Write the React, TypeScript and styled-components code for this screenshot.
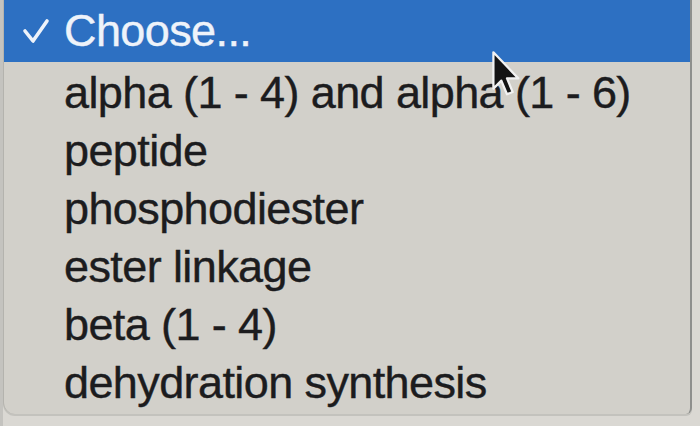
import React from "react";
import styled, { createGlobalStyle } from "styled-components";

const GlobalStyle = createGlobalStyle`
  html, body {
    margin: 0;
    padding: 0;
    background: #dcdad5;
  }
  body {
    width: 700px;
    height: 426px;
    overflow: hidden;
    font-family: "Liberation Sans", Arial, Helvetica, sans-serif;
  }
`;

const Screen = styled.div`
  position: relative;
  width: 700px;
  height: 426px;
  background: linear-gradient(90deg, #c4c3bf 0px, #c4c3bf 3px, #dad8d3 3px);
`;

const Menu = styled.ul`
  list-style: none;
  margin: 0 0 0 3px;
  padding: 0 0 2px 0;
  width: 686px;
  background: #d2d0ca;
  border-left: 1px solid #b4b3ae;
  border-right: 2px solid #8e8f8d;
  border-bottom-left-radius: 12px;
  border-bottom-right-radius: 6px;
  box-shadow: 0 2px 0 #c3c2bd;
`;

const Option = styled.li<{ $selected?: boolean }>`
  display: flex;
  align-items: center;
  height: ${({ $selected }) => ($selected ? "62px" : "58px")};
  margin-bottom: ${({ $selected }) => ($selected ? "2px" : "0")};
  padding-left: 18px;
  background: ${({ $selected }) => ($selected ? "#2d70c2" : "transparent")};
  color: ${({ $selected }) => ($selected ? "#eef3fa" : "#1c1c1e")};
  font-size: 45px;
  letter-spacing: -0.6px;
  -webkit-text-stroke: 0.4px currentColor;
  white-space: nowrap;
`;

const Check = styled.span`
  display: inline-flex;
  width: 42px;
  justify-content: flex-start;
`;

const Cursor = styled.svg`
  position: absolute;
  left: 490px;
  top: 50px;
`;

const options = [
  "alpha (1 - 4) and alpha (1 - 6)",
  "peptide",
  "phosphodiester",
  "ester linkage",
  "beta (1 - 4)",
  "dehydration synthesis",
];

export default function App() {
  return (
    <>
      <GlobalStyle />
      <Screen>
        <Menu>
          <Option $selected>
            <Check>
              <svg width="28" height="26" viewBox="0 0 28 26">
                <polyline
                  points="3,13 11,23 25,3"
                  fill="none"
                  stroke="#eef3fa"
                  strokeWidth="3.6"
                  strokeLinecap="round"
                  strokeLinejoin="round"
                />
              </svg>
            </Check>
            Choose...
          </Option>
          {options.map((label) => (
            <Option key={label}>
              <Check />
              {label}
            </Option>
          ))}
        </Menu>
        {/* mouse pointer over the list */}
        <Cursor width="34" height="50" viewBox="0 0 30 44">
          <path
            d="M3 2 L3 34 L10 27 L15 39 L20 37 L15 25 L25 25 Z"
            fill="#141414"
            stroke="#f2f2f2"
            strokeWidth="2"
            strokeLinejoin="round"
          />
        </Cursor>
      </Screen>
    </>
  );
}
